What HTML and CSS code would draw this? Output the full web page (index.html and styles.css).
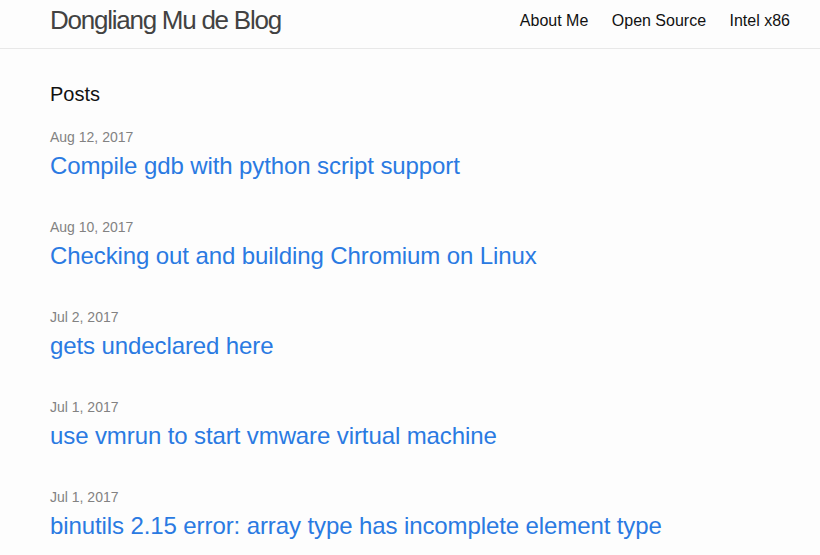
FILE: index.html
```html
<!DOCTYPE html>
<html lang="en">
<head>
  <meta charset="UTF-8">
  <meta name="viewport" content="width=device-width, initial-scale=1.0">
  <title>Dongliang Mu de Blog</title>
  <link rel="stylesheet" href="styles.css">
</head>
<body>
  <header class="site-header">
    <div class="wrapper header-row">
      <a class="site-title" href="#">Dongliang Mu de Blog</a>
      <nav class="site-nav">
        <a class="page-link" href="#">About Me</a>
        <a class="page-link" href="#">Open Source</a>
        <a class="page-link" href="#">Intel x86</a>
      </nav>
    </div>
  </header>

  <main class="page-content">
    <div class="wrapper">
      <h1 class="page-heading">Posts</h1>
      <ul class="post-list">
        <li>
          <span class="post-meta">Aug 12, 2017</span>
          <h2><a class="post-link" href="#">Compile gdb with python script support</a></h2>
        </li>
        <li>
          <span class="post-meta">Aug 10, 2017</span>
          <h2><a class="post-link" href="#">Checking out and building Chromium on Linux</a></h2>
        </li>
        <li>
          <span class="post-meta">Jul 2, 2017</span>
          <h2><a class="post-link" href="#">gets undeclared here</a></h2>
        </li>
        <li>
          <span class="post-meta">Jul 1, 2017</span>
          <h2><a class="post-link" href="#">use vmrun to start vmware virtual machine</a></h2>
        </li>
        <li>
          <span class="post-meta">Jul 1, 2017</span>
          <h2><a class="post-link" href="#">binutils 2.15 error: array type has incomplete element type</a></h2>
        </li>
      </ul>
    </div>
  </main>
</body>
</html>
```

FILE: styles.css
```css
/* Base */
body {
  margin: 0;
  padding: 0;
  font-family: "Liberation Sans", Arial, sans-serif;
  font-size: 16px;
  line-height: 1.5;
  color: #111;
  background-color: #fdfdfd;
}

a {
  text-decoration: none;
}

.wrapper {
  max-width: 740px;
  margin-left: 50px;
}

/* Header */
.site-header {
  height: 48px;
  border-bottom: 1px solid #e8e8e8;
}

.header-row {
  display: flex;
  justify-content: space-between;
  align-items: center;
  height: 40px;
}

.site-title {
  font-size: 26px;
  line-height: 40px;
  letter-spacing: -1.25px;
  color: #424242;
}

.site-nav {
  line-height: 24px;
  padding-top: 1px;
}

.page-link {
  color: #111;
}

.page-link:not(:last-child) {
  margin-right: 19px;
}

/* Posts */
.page-content {
  padding: 30px 0;
}

.page-heading {
  font-size: 20px;
  font-weight: normal;
  line-height: 30px;
  margin: 0 0 18px;
}

.post-list {
  list-style: none;
  margin: 0;
  padding: 0;
}

.post-list li {
  margin-bottom: 33px;
}

.post-meta {
  display: block;
  font-size: 14px;
  line-height: 21px;
  color: #828282;
}

.post-list h2 {
  margin: 0;
  font-size: 24px;
  font-weight: normal;
  line-height: 36px;
}

.post-link {
  color: #2a7ae2;
  letter-spacing: -0.1px;
}
```
